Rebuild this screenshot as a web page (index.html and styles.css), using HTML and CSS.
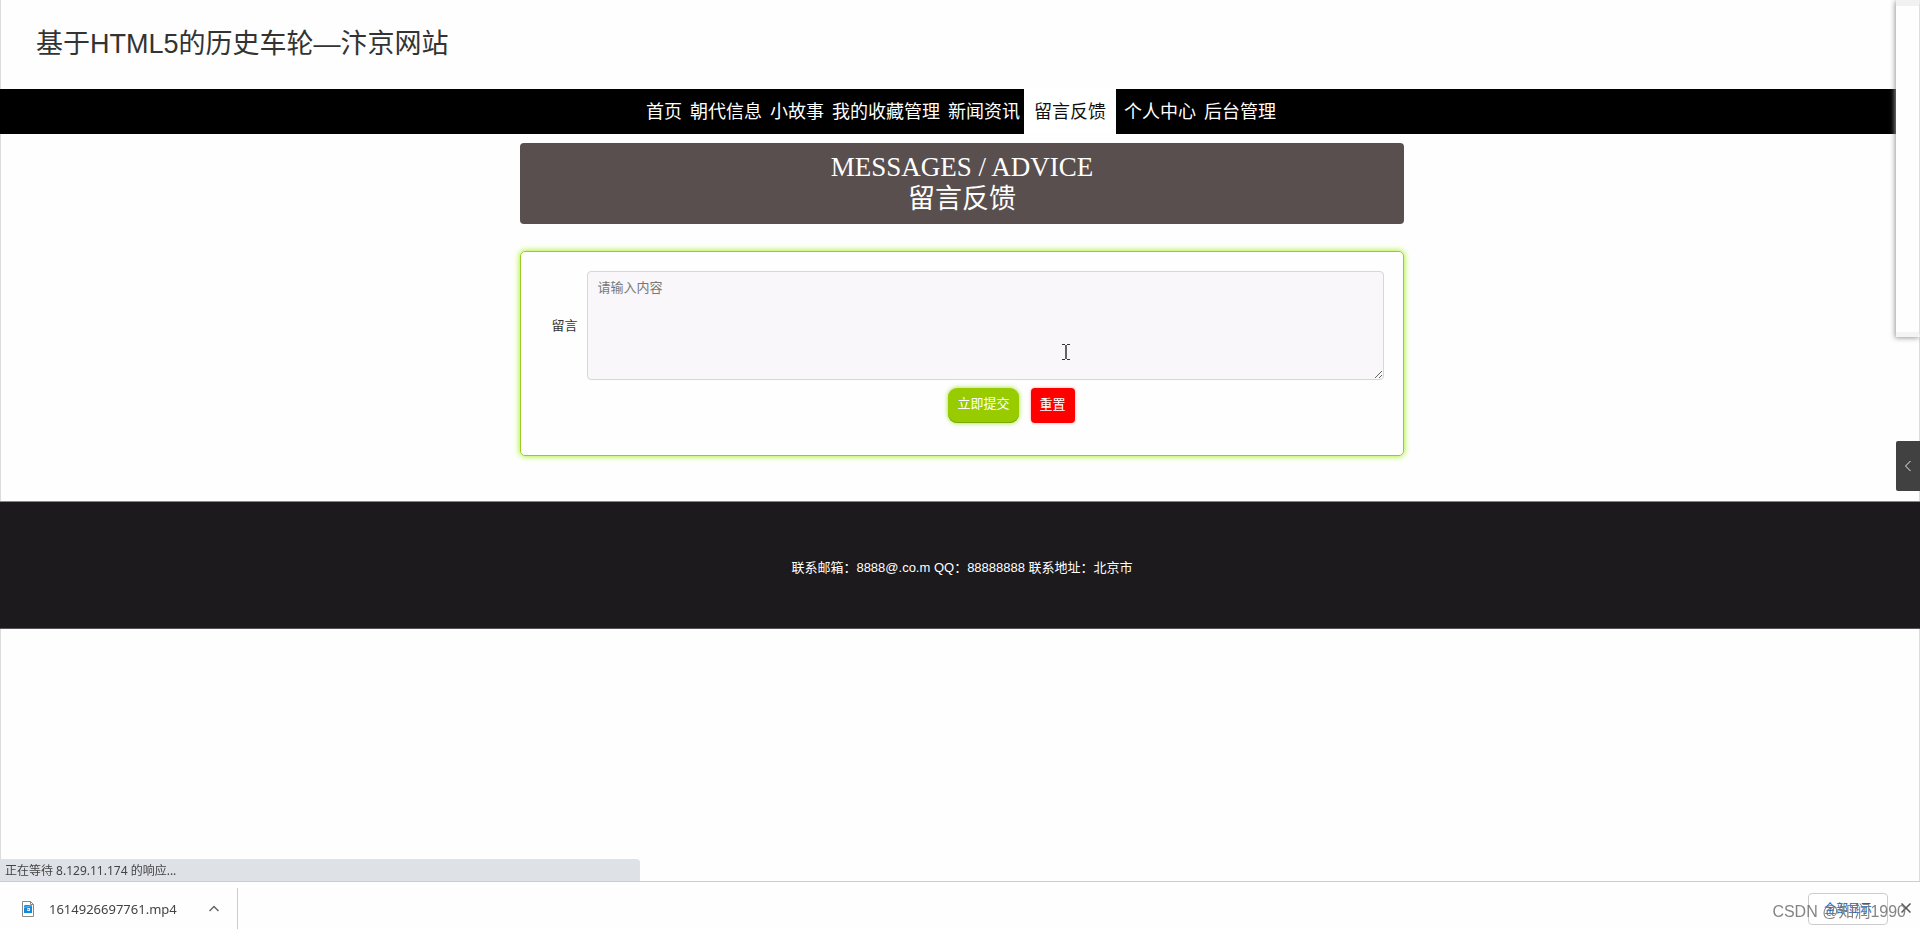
FILE: index.html
```html
<!DOCTYPE html>
<html lang="zh-CN">
<head>
<meta charset="utf-8">
<title>留言反馈</title>
<link rel="stylesheet" href="styles.css">
</head>
<body>
<header class="site-header"><h1 class="site-title">基于HTML5的历史车轮—汴京网站</h1></header>
<nav class="site-nav">
  <a href="#">首页</a>
  <a href="#">朝代信息</a>
  <a href="#">小故事</a>
  <a href="#">我的收藏管理</a>
  <a href="#">新闻资讯</a>
  <a href="#" class="active">留言反馈</a>
  <a href="#">个人中心</a>
  <a href="#">后台管理</a>
</nav>
<main class="content">
  <h2 class="banner">MESSAGES / ADVICE<br>留言反馈</h2>
  <form class="message-form">
    <div class="field">
      <label for="message">留言</label>
      <textarea id="message" placeholder="请输入内容"></textarea>
    </div>
    <div class="actions">
      <button type="submit" class="submit">立即提交</button>
      <button type="reset" class="reset">重置</button>
    </div>
  </form>
</main>
<footer class="site-footer">联系邮箱：8888@.co.m QQ：88888888 联系地址：北京市</footer>

<svg class="text-cursor" width="8" height="18" viewBox="0 0 8 18" fill="none" stroke="#333"><path d="M0 1.5h3M5 1.5h3M0 16.5h3M5 16.5h3"/><path d="M4 2v14" stroke-width="1.5"/></svg>
<div class="side-panel"></div>
<button type="button" class="side-tab" aria-label="展开"><svg width="8" height="12" viewBox="0 0 8 12" fill="none" stroke="#eee"><path d="M6.500 1 1.500 6l5 5"/></svg></button>

<div class="browser-bottom">
  <div class="status">正在等待 8.129.11.174 的响应...</div>
  <div class="downloads">
    <div class="download-item">
      <svg width="12" height="16" viewBox="0 0 12 16"><path d="M.5.5h8l3 3v12H.5z" fill="#fff" stroke="#888"/><path d="M8.500.5v3h3" fill="none" stroke="#888"/><path d="M2 5l1-1h7v8H2z" fill="#1687d9"/><path d="M2 6l8-2v1L2 7z" fill="#5cc0f4"/><path d="M5 7h3v3H5z" fill="#eaf6ff"/><path d="M5.500 7.500l2 1-2 1z" fill="#1687d9"/></svg>
      <span class="file-name">1614926697761.mp4</span>
      <button type="button" class="icon-button" aria-label="菜单"><svg width="10" height="7" viewBox="0 0 10 7" fill="none" stroke="#666" stroke-width="1.500"><path d="M.5 6 5 1.500 9.500 6"/></svg></button>
    </div>
    <button type="button" class="show-all">全部显示</button>
    <button type="button" class="icon-button" aria-label="关闭"><svg width="10" height="10" viewBox="0 0 10 10" fill="none" stroke="#555" stroke-width="1.500"><path d="M.5.5l9 9M9.500.5l-9 9"/></svg></button>
  </div>
  <div class="watermark">CSDN @知润1990</div>
</div>
</body>
</html>
```

FILE: styles.css
```css
* { box-sizing: border-box; }
body {
  margin: 0;
  min-height: 100vh;
  background: #fefefe;
  color: #333;
  font: 13px/20px "Liberation Sans", "Noto Sans CJK SC", sans-serif;
  box-shadow: inset 1px 0 #dcdcdc, inset -1px 0 #dcdcdc;
}
button { font: inherit; border: 0; padding: 0; cursor: pointer; }
.site-header { padding: 24px 36px 25px; }
.site-title { margin: 0; font-size: 27px; line-height: 40px; font-weight: 400; }
.site-nav {
  display: flex;
  justify-content: center;
  padding-left: 2px;
  background: #000;
  font-size: 18px;
}
.site-nav a { padding: 1px 4px 0; line-height: 44px; color: #fff; text-decoration: none; }
.site-nav .active { margin-right: 4px; padding: 1px 10px 0; background: #fff; color: #111; }
.content { width: 46%; margin: 0 auto; padding: 9px 0 45px; position: relative; left: 2px; }
.banner {
  margin: 0 0 27px;
  padding: 8px 8px 9px;
  border-radius: 4px;
  background: #594f4f;
  color: #fff;
  text-align: center;
  font: 400 27px/32px "Liberation Serif", "Noto Sans CJK SC", serif;
}
.message-form {
  padding: 19px 19px 32px 30px;
  border: 1px solid #9c2;
  border-radius: 5px;
  box-shadow: 0 0 6px #9e0;
}
.field { display: flex; align-items: center; gap: 10px; }
.field textarea {
  flex: 1;
  height: 109px;
  padding: 6px 9px;
  border: 1px solid #d8d8d0;
  border-radius: 4px;
  background: #f9f7fa;
  font: inherit;
  resize: both;
}
.field textarea::placeholder { color: #777; }
.actions { display: flex; justify-content: center; gap: 12px; padding: 8px 0 0 88px; }
.actions button { height: 35px; color: #fff; }
.actions .submit {
  padding: 0 9px 4px;
  border-radius: 9px;
  background: #9c0;
  box-shadow: 0 0 5px #9d3, inset 0 -1px #7ca800;
}
.actions .reset { padding: 0 9px 2px; border-radius: 4px; background: #f00; box-shadow: 0 0 3px #f99; }
.site-footer {
  padding: 56px 0 50px 4px;
  border-top: 1px solid #888;
  border-bottom: 1px solid #555;
  background: #1c1a1c;
  color: #fff;
  text-align: center;
}
.text-cursor { position: absolute; left: 1062px; top: 343px; }
.side-panel {
  position: absolute;
  top: 0;
  right: 0;
  width: 24px;
  height: 337px;
  border-top: 6px solid #f1f1f2;
  border-bottom: 5px solid #f4f4f4;
  border-right: 1px solid #ddd;
  background: #fefefe;
  box-shadow: -1px 1px 5px #999;
}
.side-tab {
  position: absolute;
  top: 441px;
  right: 0;
  display: grid;
  place-items: center;
  width: 24px;
  height: 50px;
  border-radius: 2px 0 0 2px;
  background: #414141;
}
.browser-bottom { position: fixed; bottom: 0; left: 0; right: 0; font-family: "Noto Sans", "Noto Sans CJK SC", sans-serif; }
.status {
  width: 640px;
  height: 22px;
  padding-left: 5px;
  border-radius: 0 4px 0 0;
  background: #dee1e6;
  color: #444;
  font-size: 12px;
  line-height: 23px;
}
.downloads {
  display: flex;
  align-items: center;
  height: 48px;
  padding-right: 9px;
  border-top: 1px solid #ccc;
  background: #fefefe;
}
.download-item {
  display: flex;
  align-items: center;
  align-self: flex-end;
  width: 238px;
  height: 41px;
  padding: 0 18px 0 22px;
  border-right: 1px solid #ccc;
}
.download-item .file-name { margin: 0 auto 0 15px; color: #444; }
.icon-button { display: grid; place-items: center; background: none; }
.show-all {
  width: 80px;
  height: 32px;
  margin: 6px 13px 0 auto;
  border: 1px solid #ccc;
  border-radius: 4px;
  background: #fff;
  color: #1a62c4;
  font-size: 12px;
}
.downloads > .icon-button { margin-top: 5px; }
.watermark {
  position: absolute;
  right: 14px;
  bottom: 7px;
  color: #777;
  opacity: 0.9;
  font: 400 16px/20px "Liberation Sans", "Noto Sans CJK SC", sans-serif;
}
```
